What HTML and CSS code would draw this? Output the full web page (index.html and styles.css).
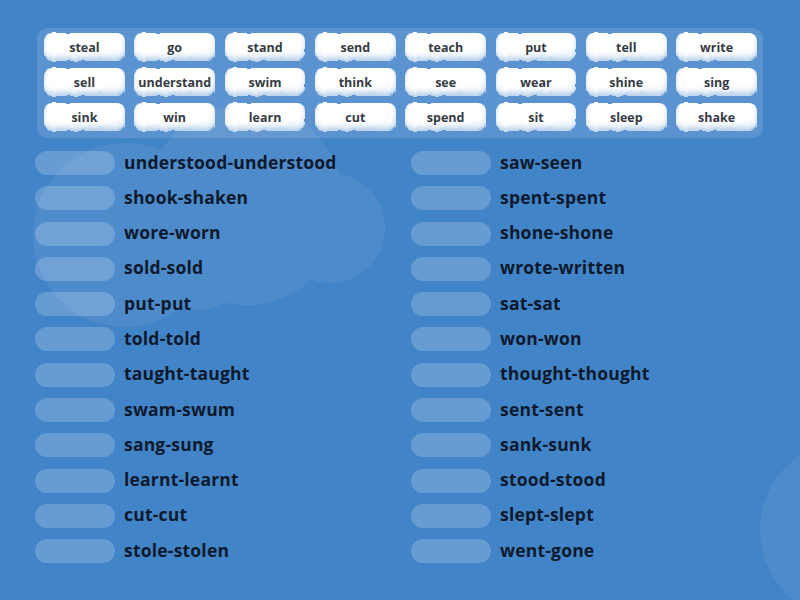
FILE: index.html
```html
<!DOCTYPE html>
<html>
<head>
<meta charset="utf-8">
<link rel="stylesheet" href="styles.css">
</head>
<body>
<svg class="backdrop" width="800" height="600" viewBox="0 0 800 600" aria-hidden="true">
  <defs>
    <filter id="fluff" x="-10%" y="-20%" width="120%" height="140%">
      <feTurbulence type="fractalNoise" baseFrequency="0.14" numOctaves="1" seed="7" result="n"/>
      <feDisplacementMap in="SourceGraphic" in2="n" scale="4" xChannelSelector="R" yChannelSelector="G"/>
    </filter>
  </defs>
  <g fill="#ffffff" opacity="0.06">
    <circle cx="125" cy="235" r="92"/>
    <circle cx="245" cy="205" r="100"/>
    <circle cx="330" cy="228" r="55"/>
    <circle cx="200" cy="270" r="40"/>
  </g>
  <g fill="#ffffff" opacity="0.06">
    <circle cx="850" cy="530" r="90"/>
  </g>
</svg>
<div class="page">
  <div class="tray">
    <div class="tile"><span>steal</span></div>
    <div class="tile"><span>go</span></div>
    <div class="tile"><span>stand</span></div>
    <div class="tile"><span>send</span></div>
    <div class="tile"><span>teach</span></div>
    <div class="tile"><span>put</span></div>
    <div class="tile"><span>tell</span></div>
    <div class="tile"><span>write</span></div>
    <div class="tile"><span>sell</span></div>
    <div class="tile"><span>understand</span></div>
    <div class="tile"><span>swim</span></div>
    <div class="tile"><span>think</span></div>
    <div class="tile"><span>see</span></div>
    <div class="tile"><span>wear</span></div>
    <div class="tile"><span>shine</span></div>
    <div class="tile"><span>sing</span></div>
    <div class="tile"><span>sink</span></div>
    <div class="tile"><span>win</span></div>
    <div class="tile"><span>learn</span></div>
    <div class="tile"><span>cut</span></div>
    <div class="tile"><span>spend</span></div>
    <div class="tile"><span>sit</span></div>
    <div class="tile"><span>sleep</span></div>
    <div class="tile"><span>shake</span></div>
  </div>
  <div class="matches">
    <div class="col">
      <div class="row"><div class="slot"></div><div class="label">understood-understood</div></div>
      <div class="row"><div class="slot"></div><div class="label">shook-shaken</div></div>
      <div class="row"><div class="slot"></div><div class="label">wore-worn</div></div>
      <div class="row"><div class="slot"></div><div class="label">sold-sold</div></div>
      <div class="row"><div class="slot"></div><div class="label">put-put</div></div>
      <div class="row"><div class="slot"></div><div class="label">told-told</div></div>
      <div class="row"><div class="slot"></div><div class="label">taught-taught</div></div>
      <div class="row"><div class="slot"></div><div class="label">swam-swum</div></div>
      <div class="row"><div class="slot"></div><div class="label">sang-sung</div></div>
      <div class="row"><div class="slot"></div><div class="label">learnt-learnt</div></div>
      <div class="row"><div class="slot"></div><div class="label">cut-cut</div></div>
      <div class="row"><div class="slot"></div><div class="label">stole-stolen</div></div>
    </div>
    <div class="col">
      <div class="row"><div class="slot"></div><div class="label">saw-seen</div></div>
      <div class="row"><div class="slot"></div><div class="label">spent-spent</div></div>
      <div class="row"><div class="slot"></div><div class="label">shone-shone</div></div>
      <div class="row"><div class="slot"></div><div class="label">wrote-written</div></div>
      <div class="row"><div class="slot"></div><div class="label">sat-sat</div></div>
      <div class="row"><div class="slot"></div><div class="label">won-won</div></div>
      <div class="row"><div class="slot"></div><div class="label">thought-thought</div></div>
      <div class="row"><div class="slot"></div><div class="label">sent-sent</div></div>
      <div class="row"><div class="slot"></div><div class="label">sank-sunk</div></div>
      <div class="row"><div class="slot"></div><div class="label">stood-stood</div></div>
      <div class="row"><div class="slot"></div><div class="label">slept-slept</div></div>
      <div class="row"><div class="slot"></div><div class="label">went-gone</div></div>
    </div>
  </div>
</div>
</body>
</html>
```

FILE: styles.css
```css
html, body {
  margin: 0;
  padding: 0;
}
body {
  position: relative;
  width: 800px;
  height: 600px;
  overflow: hidden;
  font-family: "Open Sans", "Lato", sans-serif;
  background-color: #4284c8;
}
.backdrop {
  position: absolute;
  left: 0;
  top: 0;
  z-index: 0;
}
.page {
  position: relative;
  z-index: 1;
  padding-top: 28px;
}
.tray {
  margin: 0 37px;
  width: 726px;
  box-sizing: border-box;
  padding: 5px 6px 7px 7px;
  border-radius: 10px;
  background: rgba(255,255,255,0.13);
  display: grid;
  grid-template-columns: repeat(8, 1fr);
  column-gap: 9.5px;
  row-gap: 7px;
}
.tile {
  position: relative;
  height: 28px;
  display: flex;
  align-items: center;
  justify-content: center;
}
.tile::before {
  content: "";
  position: absolute;
  inset: 0;
  border-radius: 8px;
  background:
    radial-gradient(ellipse at 25% 30%, rgba(255,255,255,1) 0 35%, rgba(255,255,255,0) 70%),
    radial-gradient(ellipse at 70% 35%, rgba(255,255,255,1) 0 30%, rgba(255,255,255,0) 65%),
    radial-gradient(ellipse at 55% 80%, rgba(222,234,246,1) 0 25%, rgba(222,234,246,0) 70%),
    #f2f7fc;
  box-shadow: inset 0 -3px 4px rgba(175,202,230,0.8), inset 0 2px 2px #ffffff;
  filter: url(#fluff);
}
.tile span {
  position: relative;
  font-weight: 700;
  font-size: 12.5px;
  color: #353b43;
}
.matches {
  margin-top: 13px;
  padding-left: 35px;
  display: grid;
  grid-template-columns: 376px 376px;
}
.col {
  display: flex;
  flex-direction: column;
  gap: 11.3px;
}
.row {
  display: flex;
  align-items: center;
  gap: 9px;
  height: 24px;
}
.slot {
  width: 80px;
  height: 24px;
  border-radius: 12px;
  background: rgba(255,255,255,0.2);
  flex: none;
}
.label {
  font-weight: 700;
  font-size: 17.5px;
  letter-spacing: 0.2px;
  color: #0d1a2d;
  margin-top: -3px;
}
```
